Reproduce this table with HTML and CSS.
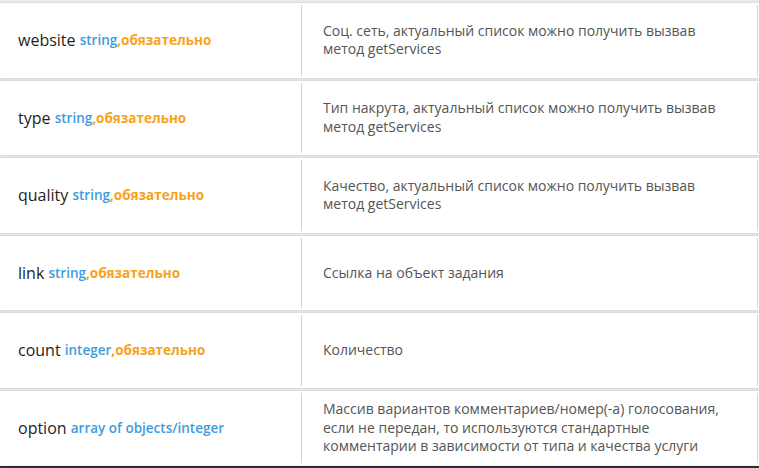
FILE: index.html
```html
<!DOCTYPE html>
<html lang="ru">
<head>
<meta charset="utf-8">
<link rel="stylesheet" href="styles.css">
</head>
<body>
<div class="params">
  <div class="row">
    <div class="name">website <span class="type">string</span><span class="req">,обязательно</span></div>
    <div class="desc">Соц. сеть, актуальный список можно получить вызвав метод getServices</div>
  </div>
  <div class="row">
    <div class="name">type <span class="type">string</span><span class="req">,обязательно</span></div>
    <div class="desc">Тип накрута, актуальный список можно получить вызвав метод getServices</div>
  </div>
  <div class="row">
    <div class="name">quality <span class="type">string</span><span class="req">,обязательно</span></div>
    <div class="desc">Качество, актуальный список можно получить вызвав метод getServices</div>
  </div>
  <div class="row">
    <div class="name">link <span class="type">string</span><span class="req">,обязательно</span></div>
    <div class="desc">Ссылка на объект задания</div>
  </div>
  <div class="row">
    <div class="name">count <span class="type">integer</span><span class="req">,обязательно</span></div>
    <div class="desc">Количество</div>
  </div>
  <div class="row">
    <div class="name">option <span class="type">array of objects/integer</span></div>
    <div class="desc">Массив вариантов комментариев/номер(-а) голосования, если не передан, то используются стандартные комментарии в зависимости от типа и качества услуги</div>
  </div>
</div>
<div class="footer"></div>
</body>
</html>
```
FILE: styles.css
```css
html, body {
  margin: 0;
  padding: 0;
  background: #ffffff;
}
body {
  width: 759px;
  height: 468px;
  overflow: hidden;
  font-family: "Open Sans", "Lato", sans-serif;
}
.params {
  display: flex;
  flex-direction: column;
  gap: 3px;
  padding-top: 3px;
  background: #e9e9ef;
}
.row {
  display: flex;
  height: 74.5px;
  box-sizing: border-box;
  padding: 2px 1px 2px 0;
  background: #ffffff;
  box-shadow: 0 0 2px rgba(120, 120, 150, 0.35);
}
.name {
  width: 301px;
  flex: none;
  box-sizing: border-box;
  padding-left: 18px;
  display: flex;
  align-items: center;
  font-size: 16px;
  color: #1e1e1e;
  white-space: pre;
}
.type {
  font-size: 13.5px;
  color: #3f9be0;
  font-weight: 600;
}
.req {
  font-size: 13.5px;
  color: #f7a21b;
  font-weight: 700;
}
.desc {
  flex: 1;
  border-left: 1px solid #d4d4d4;
  border-right: 1px solid #d4d4d4;
  display: flex;
  align-items: center;
  padding: 0 22px 0 21px;
  font-size: 14px;
  line-height: 18.5px;
  color: #555555;
}
.footer {
  height: 5px;
  margin-top: 1px;
  background: #2b3139;
}
```
